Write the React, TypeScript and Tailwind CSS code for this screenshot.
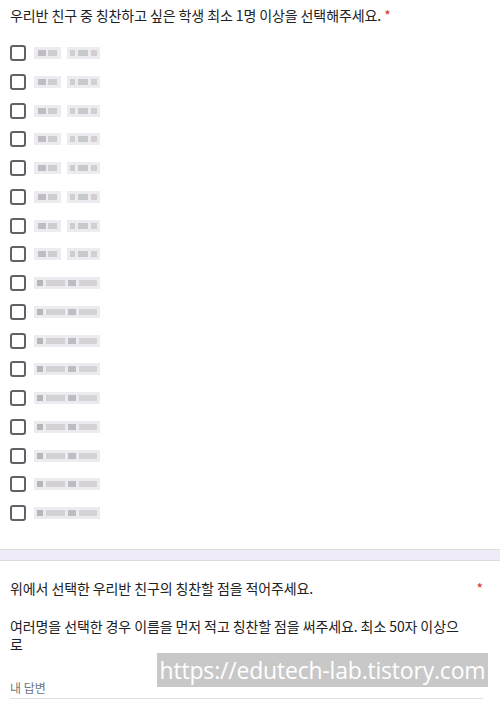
import React from "react";

// blurred name placeholders: [first block width, second block width]
const names: Array<[number, number]> = [
  [27, 33], [27, 33], [27, 33], [27, 33], [27, 33], [27, 33], [27, 33], [27, 33],
  [27, 33], [33, 33], [33, 33], [33, 33], [33, 33], [33, 33], [33, 33], [33, 33], [38, 28],
];

const BlurredName: React.FC<{ w1: number; w2: number; idx: number }> = ({ w1, w2, idx }) => {
  const long = idx >= 8;
  return (
    <div className="flex items-center gap-[6px] blur-[0.6px]">
      {long ? (
        <div className="h-[12px] w-[66px] bg-[#ecebef] flex items-center px-[3px] gap-[3px]">
          <div className="h-[6px] w-[6px] bg-[#b8b4bc]" />
          <div className="h-[6px] flex-1 bg-[#d3d0d6]" />
          <div className="h-[6px] w-[8px] bg-[#bcbdc2]" />
          <div className="h-[6px] flex-1 bg-[#d6d3d8]" />
        </div>
      ) : (
        <>
          <div
            className="h-[12px] bg-[#ecebef] flex items-center px-[4px] gap-[2px]"
            style={{ width: w1 }}
          >
            <div className="h-[6px] w-[8px] bg-[#c1bbc3]" />
            <div className="h-[6px] flex-1 bg-[#cfcdd2]" />
          </div>
          <div
            className="h-[12px] bg-[#ecebef] flex items-center px-[3px] gap-[3px]"
            style={{ width: w2 }}
          >
            <div className="h-[6px] w-[5px] bg-[#d0cdd2]" />
            <div className="h-[6px] flex-1 bg-[#c8c9cd]" />
            <div className="h-[6px] w-[6px] bg-[#d2ced4]" />
          </div>
        </>
      )}
    </div>
  );
};

export default function App() {
  return (
    <div
      className="w-[500px] h-[713px] overflow-hidden bg-white text-[#202124]"
      style={{ fontFamily: '"Noto Sans CJK KR", "Noto Sans", sans-serif' }}
    >
      {/* first question card */}
      <div className="bg-white border-b border-[#dadce0] pl-[10px] pt-[5px] h-[550px]">
        <div className="text-[14px] leading-[20px] tracking-[-0.1px]">
          우리반 친구 중 칭찬하고 싶은 학생 최소 1명 이상을 선택해주세요.{" "}
          <span className="text-[#d93025]">*</span>
        </div>
        <div className="mt-[20px] flex flex-col">
          {names.map(([w1, w2], i) => (
            <div key={i} className="h-[28.75px] flex items-start gap-[8px]">
              <div className="w-[16px] h-[16px] border-2 border-[#5f6368] rounded-[3px]" />
              <div className="pt-[2px]">
                <BlurredName w1={w1} w2={w2} idx={i} />
              </div>
            </div>
          ))}
        </div>
      </div>

      {/* page background band */}
      <div className="h-[10px] bg-[#f0ebf8]" />

      {/* second question card */}
      <div className="bg-white border-t border-[#dadce0] px-[10px] pt-[17px] relative">
        <div className="flex justify-between items-start text-[14px] leading-[20px] tracking-[-0.1px]">
          <span>위에서 선택한 우리반 친구의 칭찬할 점을 적어주세요.</span>
          <span className="text-[#d93025] mr-[7px]">*</span>
        </div>
        <div className="mt-[19px] text-[14px] leading-[18px] tracking-[-0.1px] pr-[30px]">
          여러명을 선택한 경우 이름을 먼저 적고 칭찬할 점을 써주세요. 최소 50자 이상으로
        </div>
        <div className="mt-[26px] w-[473px] border-b border-[#e0e0e0] pb-[1px]">
          <div className="text-[12px] leading-[18px] text-[#70757a]">내 답변</div>
        </div>

        {/* blog watermark */}
        <div
          className="absolute left-[157px] top-[92px] w-[331px] h-[34px] bg-[#c8c8c8] flex items-center justify-center whitespace-nowrap text-white text-[23px] leading-none tracking-[-0.2px]"
          style={{ fontFamily: '"Open Sans", "Noto Sans", sans-serif' }}
        >
          https://edutech-lab.tistory.com
        </div>
      </div>
    </div>
  );
}
